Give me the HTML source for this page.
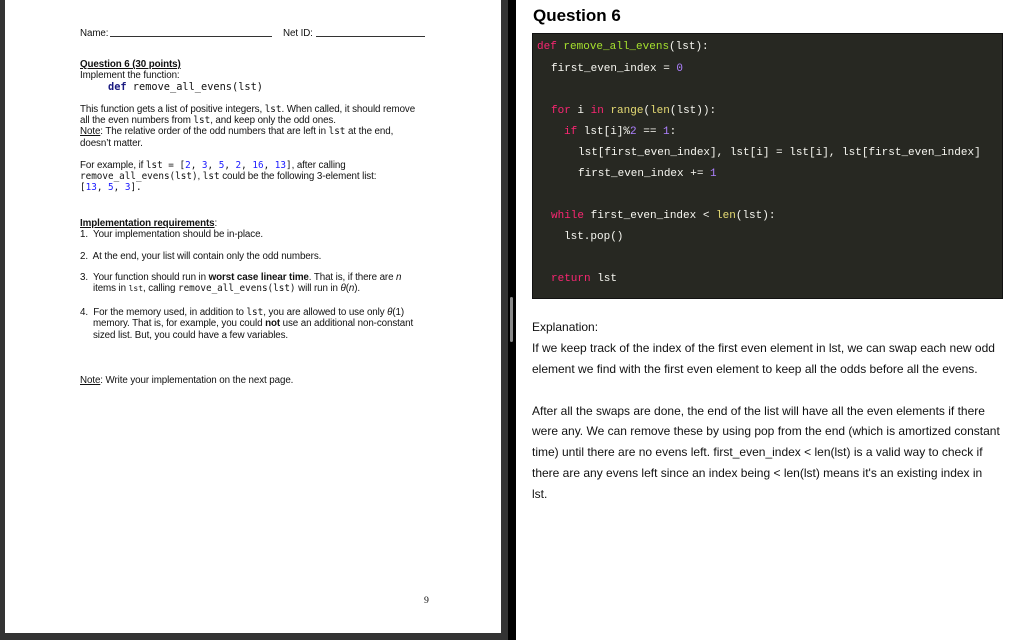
<!DOCTYPE html>
<html><head><meta charset="utf-8"><style>
body{margin:0;width:1024px;height:640px;position:relative;background:#fff;overflow:hidden;font-family:"Liberation Sans",sans-serif}
.l{position:absolute;white-space:nowrap;font-size:9.8px;color:#111;line-height:10px;letter-spacing:-0.1px;margin-top:2px}
.m{font-family:"DejaVu Sans Mono",monospace;font-size:9.3px;letter-spacing:0}
.b{color:#1a1aff}
.c{position:absolute;white-space:nowrap;font-family:"Liberation Mono",monospace;font-size:11px;color:#f8f8f2;line-height:14px}
.k{color:#f92672}.g{color:#a6e22e}.p{color:#ae81ff}.y{color:#e6db74}
.r{position:absolute;white-space:nowrap;font-size:12px;color:#111;line-height:14px;left:532px}
.u{position:absolute;height:1px;background:#333}
</style></head><body>
<div style="position:absolute;left:0;top:0;width:5px;height:640px;background:#333"></div>
<div style="position:absolute;left:0;top:633px;width:508px;height:7px;background:#333"></div>
<div style="position:absolute;left:501px;top:0;width:7px;height:640px;background:#333"></div>
<div style="position:absolute;left:508px;top:0;width:8px;height:640px;background:#000"></div>
<div style="position:absolute;left:510px;top:297px;width:3px;height:45px;background:#888;border-radius:2px"></div>

<div class="l" style="left:80px;top:27px">Name:</div>
<div class="u" style="left:110px;top:36px;width:162px"></div>
<div class="l" style="left:283px;top:27px">Net ID:</div>
<div class="u" style="left:316px;top:36px;width:109px"></div>
<div class="l" style="left:80px;top:58px;font-weight:bold;text-decoration:underline">Question 6 (30 points)</div>
<div class="l" style="left:80px;top:69px">Implement the function:</div>
<div class="l m" style="left:108px;top:80px;font-size:10.3px"><b style="color:#1a1a80">def</b> remove_all_evens(lst)</div>
<div class="l" style="left:80px;top:103px">This function gets a list of positive integers, <span class="m">lst</span>. When called, it should remove</div>
<div class="l" style="left:80px;top:114px">all the even numbers from <span class="m">lst</span>, and keep only the odd ones.</div>
<div class="l" style="left:80px;top:125px"><u>Note</u>: The relative order of the odd numbers that are left in <span class="m">lst</span> at the end,</div>
<div class="l" style="left:80px;top:137px">doesn’t matter.</div>
<div class="l" style="left:80px;top:159px">For example, if <span class="m">lst = [<span class="b">2</span>, <span class="b">3</span>, <span class="b">5</span>, <span class="b">2</span>, <span class="b">16</span>, <span class="b">13</span>]</span>, after calling</div>
<div class="l" style="left:80px;top:170px"><span class="m">remove_all_evens(lst)</span>, <span class="m">lst</span> could be the following 3-element list:</div>
<div class="l m" style="left:80px;top:181px">[<span class="b">13</span>, <span class="b">5</span>, <span class="b">3</span>].</div>
<div class="l" style="left:80px;top:217px"><u><b>Implementation requirements</b></u>:</div>
<div class="l" style="left:80px;top:228px">1.&nbsp; Your implementation should be in-place.</div>
<div class="l" style="left:80px;top:250px">2.&nbsp; At the end, your list will contain only the odd numbers.</div>
<div class="l" style="left:80px;top:271px">3.&nbsp; Your function should run in <b>worst case linear time</b>. That is, if there are <i>n</i></div>
<div class="l" style="left:93px;top:282px">items in <span class="m" style="font-size:8px">lst</span>, calling <span class="m">remove_all_evens(lst)</span> will run in <i>θ</i>(<i>n</i>).</div>
<div class="l" style="left:80px;top:306px">4.&nbsp; For the memory used, in addition to <span class="m">lst</span>, you are allowed to use only <i>θ</i>(1)</div>
<div class="l" style="left:93px;top:317px">memory. That is, for example, you could <b>not</b> use an additional non-constant</div>
<div class="l" style="left:93px;top:329px">sized list. But, you could have a few variables.</div>
<div class="l" style="left:80px;top:374px"><u>Note</u>: Write your implementation on the next page.</div>
<div class="l" style="left:424px;top:594px;font-family:'Liberation Serif',serif">9</div>

<div style="position:absolute;left:533px;top:6px;font-size:17px;font-weight:bold;color:#000">Question 6</div>
<div style="position:absolute;left:532px;top:33px;width:469px;height:264px;background:#272822;border:1px solid #111"></div>
<div class="c" style="left:537px;top:40px"><span class="k">def</span> <span class="g">remove_all_evens</span>(lst):</div>
<div class="c" style="left:551px;top:62px">first_even_index = <span class="p">0</span></div>
<div class="c" style="left:551px;top:104px"><span class="k">for</span> i <span class="k">in</span> <span class="y">range</span>(<span class="y">len</span>(lst)):</div>
<div class="c" style="left:564px;top:125px"><span class="k">if</span> lst[i]%<span class="p">2</span> == <span class="p">1</span>:</div>
<div class="c" style="left:578px;top:146px">lst[first_even_index], lst[i] = lst[i], lst[first_even_index]</div>
<div class="c" style="left:578px;top:167px">first_even_index += <span class="p">1</span></div>
<div class="c" style="left:551px;top:209px"><span class="k">while</span> first_even_index &lt; <span class="y">len</span>(lst):</div>
<div class="c" style="left:564px;top:230px">lst.pop()</div>
<div class="c" style="left:551px;top:272px"><span class="k">return</span> lst</div>

<div class="r" style="top:320px">Explanation:</div>
<div class="r" style="top:341px">If we keep track of the index of the first even element in lst, we can swap each new odd</div>
<div class="r" style="top:362px">element we find with the first even element to keep all the odds before all the evens.</div>
<div class="r" style="top:404px">After all the swaps are done, the end of the list will have all the even elements if there</div>
<div class="r" style="top:424px">were any. We can remove these by using pop from the end (which is amortized constant</div>
<div class="r" style="top:445px">time) until there are no evens left. first_even_index &lt; len(lst) is a valid way to check if</div>
<div class="r" style="top:466px">there are any evens left since an index being &lt; len(lst) means it's an existing index in</div>
<div class="r" style="top:487px">lst.</div>
</body></html>
